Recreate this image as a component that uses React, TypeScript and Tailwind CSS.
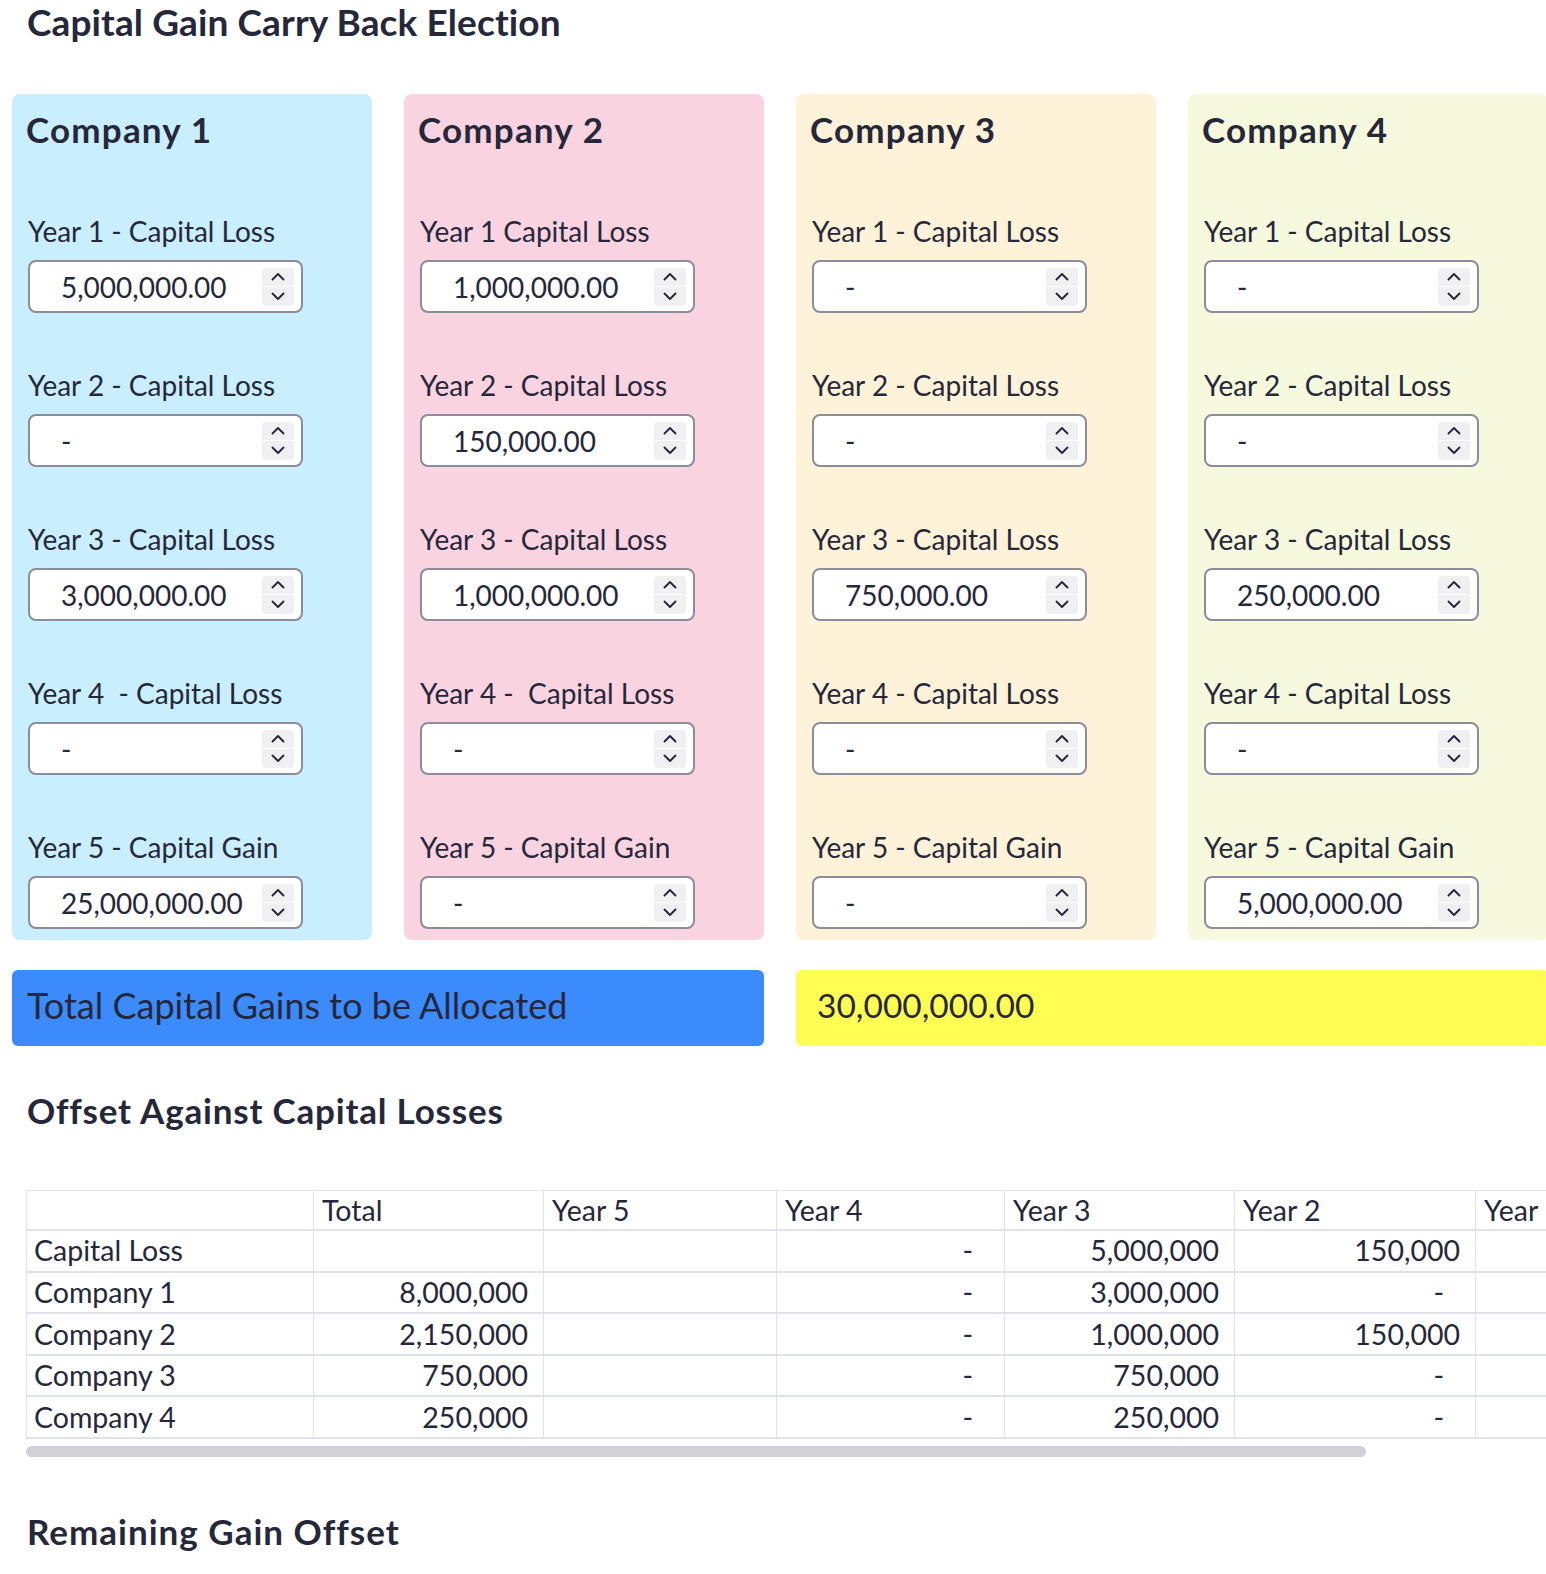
import React from "react";

type Field = { label: string; value: string };

const COMPANIES: { name: string; bg: string; fields: Field[] }[] = [
  {
    name: "Company 1",
    bg: "bg-[#c9effe]",
    fields: [
      { label: "Year 1 - Capital Loss", value: "5,000,000.00" },
      { label: "Year 2 - Capital Loss", value: "-" },
      { label: "Year 3 - Capital Loss", value: "3,000,000.00" },
      { label: "Year 4  - Capital Loss", value: "-" },
      { label: "Year 5 - Capital Gain", value: "25,000,000.00" },
    ],
  },
  {
    name: "Company 2",
    bg: "bg-[#f9d4e0]",
    fields: [
      { label: "Year 1 Capital Loss", value: "1,000,000.00" },
      { label: "Year 2 - Capital Loss", value: "150,000.00" },
      { label: "Year 3 - Capital Loss", value: "1,000,000.00" },
      { label: "Year 4 -  Capital Loss", value: "-" },
      { label: "Year 5 - Capital Gain", value: "-" },
    ],
  },
  {
    name: "Company 3",
    bg: "bg-[#fef2d9]",
    fields: [
      { label: "Year 1 - Capital Loss", value: "-" },
      { label: "Year 2 - Capital Loss", value: "-" },
      { label: "Year 3 - Capital Loss", value: "750,000.00" },
      { label: "Year 4 - Capital Loss", value: "-" },
      { label: "Year 5 - Capital Gain", value: "-" },
    ],
  },
  {
    name: "Company 4",
    bg: "bg-[#f6f9dd]",
    fields: [
      { label: "Year 1 - Capital Loss", value: "-" },
      { label: "Year 2 - Capital Loss", value: "-" },
      { label: "Year 3 - Capital Loss", value: "250,000.00" },
      { label: "Year 4 - Capital Loss", value: "-" },
      { label: "Year 5 - Capital Gain", value: "5,000,000.00" },
    ],
  },
];

const COLUMNS = ["", "Total", "Year 5", "Year 4", "Year 3", "Year 2", "Year 1"];

const ROWS: string[][] = [
  ["Capital Loss", "", "", "-", "5,000,000", "150,000", "6,000,000"],
  ["Company 1", "8,000,000", "", "-", "3,000,000", "-", "5,000,000"],
  ["Company 2", "2,150,000", "", "-", "1,000,000", "150,000", "1,000,000"],
  ["Company 3", "750,000", "", "-", "750,000", "-", "-"],
  ["Company 4", "250,000", "", "-", "250,000", "-", "-"],
];

function Chevron({ up }: { up?: boolean }) {
  return (
    <svg width="14" height="9" viewBox="0 0 14 9" fill="none" aria-hidden>
      <path
        d={up ? "M1.5 7.5 L7 2 L12.5 7.5" : "M1.5 1.5 L7 7 L12.5 1.5"}
        stroke="#262839"
        strokeWidth="1.9"
        strokeLinecap="round"
        strokeLinejoin="round"
      />
    </svg>
  );
}

function NumberField({ label, value }: Field) {
  return (
    <div className="flex flex-col">
      <label className="whitespace-pre text-[28px] leading-[34px]">{label}</label>
      <div className="mt-[12px] flex h-[53px] w-[275px] items-center rounded-[8px] border-2 border-[#8d8c9a] bg-white pr-[7px] pl-[31px]">
        <span className="flex-1 text-[28px] leading-[34px]">{value}</span>
        <div className="flex h-[38px] w-[32px] flex-col gap-[1px]">
          <div className="flex flex-1 items-center justify-center rounded-t-[4px] bg-[#f0f0f2]">
            <Chevron up />
          </div>
          <div className="flex flex-1 items-center justify-center rounded-b-[4px] bg-[#f0f0f2]">
            <Chevron />
          </div>
        </div>
      </div>
    </div>
  );
}

export default function App() {
  return (
    <div
      className="min-h-[1574px] w-full overflow-hidden bg-white text-[#262839]"
      style={{ fontFamily: "Lato, 'Noto Sans', sans-serif" }}
    >
      <h1 className="-mt-[1px] pl-[27px] text-[37px] leading-[45px] font-bold tracking-[0.1px]">
        Capital Gain Carry Back Election
      </h1>

      <div className="mt-[50px] flex w-[1600px] gap-[32px] pl-[12px]">
        {COMPANIES.map((c) => (
          <div
            key={c.name}
            className={`${c.bg} flex h-[846px] w-[360px] shrink-0 flex-col rounded-[8px] pt-[14px] pl-[16px]`}
          >
            <h2 className="-ml-[2px] text-[35px] leading-[42px] font-bold tracking-[1.2px]">{c.name}</h2>
            <div className="mt-[64px] flex flex-col gap-[55px]">
              {c.fields.map((f, i) => (
                <NumberField key={i} {...f} />
              ))}
            </div>
          </div>
        ))}
      </div>

      <div className="mt-[30px] flex w-[1600px] gap-[32px] pl-[12px]">
        <div className="flex h-[76px] w-[752px] shrink-0 items-center rounded-[6px] bg-[#3b8bfc] pb-[6px] pl-[15px] text-[36px]">
          Total Capital Gains to be Allocated
        </div>
        <div className="flex h-[76px] w-[752px] shrink-0 items-center rounded-[6px] bg-[#fffd52] pb-[5px] pl-[21px] text-[33.5px]">
          30,000,000.00
        </div>
      </div>

      <h2 className="mt-[43px] pl-[27px] text-[35px] leading-[42px] font-bold tracking-[0.8px]">
        Offset Against Capital Losses
      </h2>

      <div className="mt-[59px] ml-[26px]">
        <div className="overflow-hidden">
          <div className="grid w-max grid-cols-[287px_230px_233px_228px_230px_241px_240px] border-t border-l border-[#e1e1eb] text-[28.5px]">
            {COLUMNS.map((h, i) => (
              <div
                key={i}
                className="flex h-[40px] items-center border-r border-b-2 border-[#e1e1eb] pl-[8px]"
              >
                {h}
              </div>
            ))}
            {ROWS.map((row, r) =>
              row.map((cell, i) => (
                <div
                  key={`${r}-${i}`}
                  className={
                    i === 0
                      ? "flex h-[41.6px] items-center border-r border-b-2 border-[#e1e1eb] pl-[7px]"
                      : cell === "-"
                        ? "flex h-[41.6px] items-center justify-end border-r border-b-2 border-[#e1e1eb] pr-[31px]"
                        : "flex h-[41.6px] items-center justify-end border-r border-b-2 border-[#e1e1eb] pr-[15px]"
                  }
                >
                  {cell}
                </div>
              ))
            )}
          </div>
        </div>
        <div className="mt-[7px] h-[11px] w-[1340px] rounded-full bg-[#d1d1d6]" />
      </div>

      <h2 className="mt-[53px] pl-[27px] text-[35px] leading-[42px] font-bold tracking-[1px]">
        Remaining Gain Offset
      </h2>
    </div>
  );
}
